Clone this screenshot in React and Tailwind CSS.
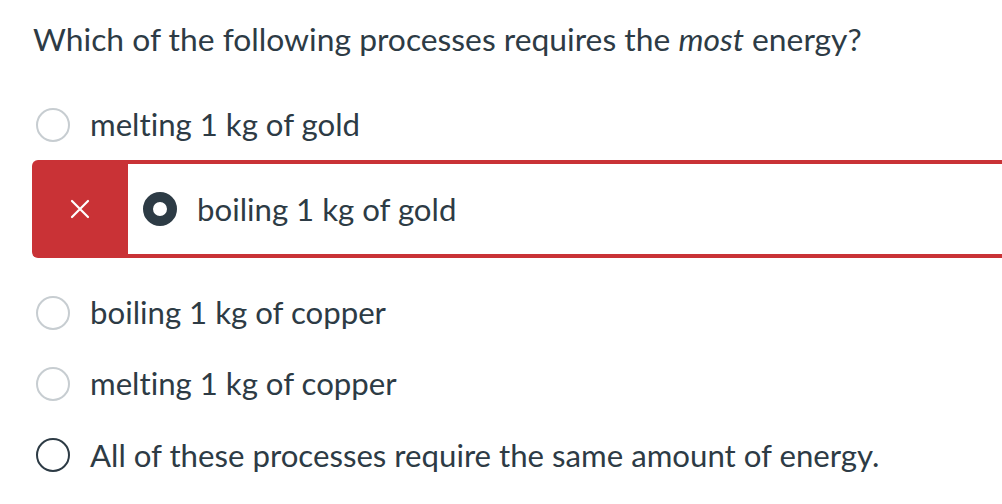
const options = [
  { label: 'melting 1 kg of gold' },
  { label: 'boiling 1 kg of gold', selected: true, wrong: true },
  { label: 'boiling 1 kg of copper' },
  { label: 'melting 1 kg of copper' },
  { label: 'All of these processes require the same amount of energy.', focused: true },
];

function Radio({ selected, focused }) {
  if (selected) {
    return (
      <span className="w-[34px] h-[34px] rounded-full border-[10px] border-[#2d3b45] bg-white shrink-0" />
    );
  }
  return (
    <span
      className={
        focused
          ? 'w-[34px] h-[34px] rounded-full border-2 border-[#2d3b45] bg-white shrink-0'
          : 'w-[34px] h-[34px] rounded-full border-2 border-[#c7cdd1] bg-white shrink-0'
      }
    />
  );
}

function XIcon() {
  return (
    <svg width="20" height="20" viewBox="0 0 20 20" fill="none">
      <path d="M2 2 L18 18 M18 2 L2 18" stroke="white" strokeWidth="2.2" strokeLinecap="round" />
    </svg>
  );
}

export default function App() {
  return (
    <div
      className="w-[1002px] h-[504px] overflow-hidden bg-white text-[#2d3b45] [font-variant-ligatures:none]"
      style={{ fontFamily: 'Lato, "Open Sans", sans-serif' }}
    >
      <h1 className="pl-[33px] pt-[19px] text-[31.8px] leading-[40px] font-normal">
        Which of the following processes requires the <em>most</em> energy?
      </h1>

      <div className="mt-[30px] pl-[32px]">
        {options.map((o) =>
          o.wrong ? (
            <div key={o.label} className="flex h-[98px] w-[1000px] rounded-l-[6px] bg-[#c93236] mb-[19px]">
              <div className="w-[96px] flex items-center justify-center">
                <XIcon />
              </div>
              <div className="flex-1 bg-white my-[4px] flex items-center pl-[15px] gap-[20px]">
                <Radio selected />
                <span className="text-[31.2px]">{o.label}</span>
              </div>
            </div>
          ) : (
            <div key={o.label} className="flex items-center h-[71px] pl-[4px] gap-[20px] last:h-[72px]">
              <Radio focused={o.focused} />
              <span className="text-[31.2px]">{o.label}</span>
            </div>
          )
        )}
      </div>
    </div>
  );
}
